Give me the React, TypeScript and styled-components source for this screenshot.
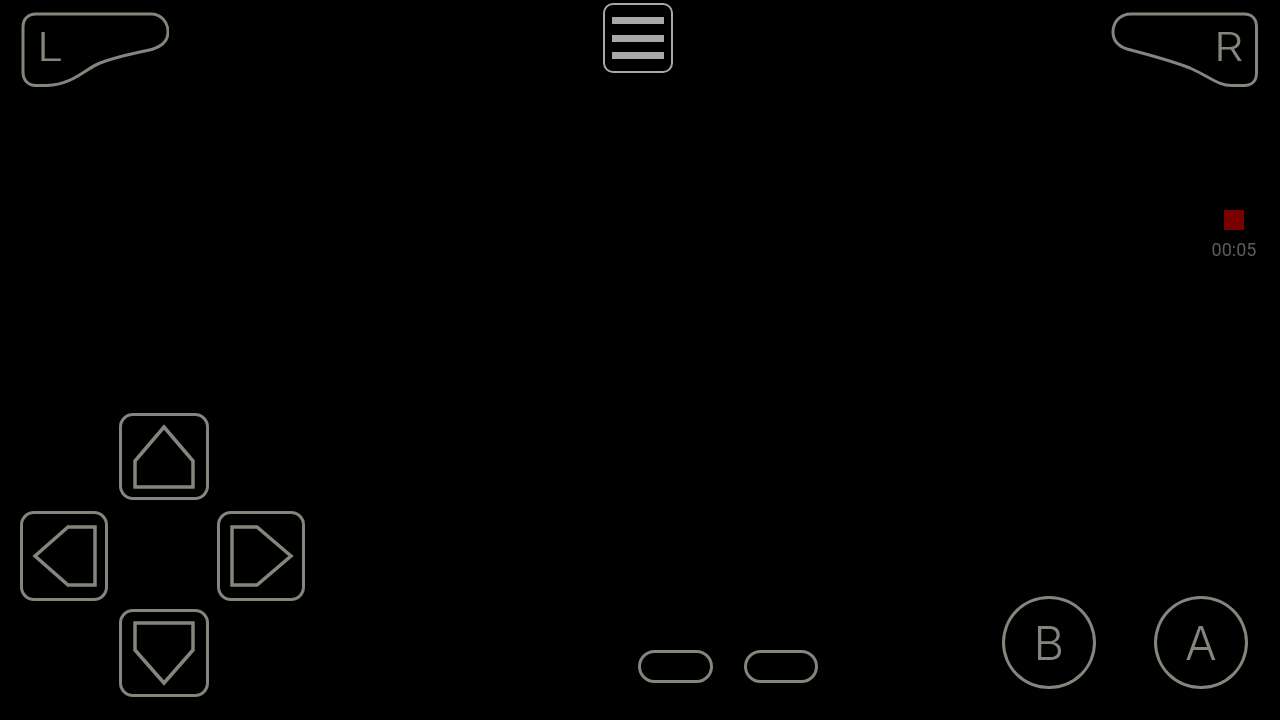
import React from 'react';
import styled, { createGlobalStyle } from 'styled-components';

const STROKE = '#85857d';

const GlobalStyle = createGlobalStyle`
  html, body {
    margin: 0;
    padding: 0;
    background: #000;
    overflow: hidden;
  }
`;

const arrows = {
  up: { viewBox: '122 416 84 81', points: '164,427 193,461 193,487 135,487 135,461' },
  left: { viewBox: '23 514 82 84', points: '35,556 68,527 95,527 95,585 68,585' },
  right: { viewBox: '220 514 82 84', points: '291,556 257,527 232,527 232,585 257,585' },
  down: { viewBox: '122 612 84 82', points: '135,623 193,623 193,650 164,683 135,650' },
};

type Direction = keyof typeof arrows;

const DpadKey: React.FC<{ direction: Direction }> = ({ direction }) => (
  <DirectionButton $direction={direction}>
    <svg width="100%" height="100%" viewBox={arrows[direction].viewBox} style={{ display: 'block' }}>
      <polygon points={arrows[direction].points} fill="none" stroke={STROKE} strokeWidth="3.500" />
    </svg>
  </DirectionButton>
);

export default function App() {
  return (
    <Screen>
      <GlobalStyle />
      <TopRow>
        <Shoulder>
          <svg width="148" height="76" viewBox="21 12 148 76">
            <path
              d="M36 14H151C161 14 168 22 168 32C168 41 162 46 153 49C137 53 118 56 100 63C85 69 72 85 47 85.500H36C28 85.500 23 80 23 72V27C23 19 28 14 36 14Z"
              fill="none"
              stroke={STROKE}
              strokeWidth="3"
            />
          </svg>
          <ShoulderLabel $side="left">L</ShoulderLabel>
        </Shoulder>
        <MenuButton>
          <MenuBar />
          <MenuBar />
          <MenuBar />
        </MenuButton>
        <Shoulder $right>
          <svg width="148" height="76" viewBox="1111 12 148 76">
            <path
              d="M1131 14H1244C1252 14 1256.500 19 1256.500 27V73C1256.500 81 1252 85.500 1244 85.500H1232C1218 85.500 1210 77 1190 68C1172 61 1150 55 1127 49C1118 46 1113 41 1113 32C1113 22 1120 14 1131 14Z"
              fill="none"
              stroke={STROKE}
              strokeWidth="3"
            />
          </svg>
          <ShoulderLabel $side="right">R</ShoulderLabel>
        </Shoulder>
      </TopRow>
      <RecordStatus>
        <RecordSquare />
        <RecordTime>00:05</RecordTime>
      </RecordStatus>
      <BottomRow>
        <Dpad>
          <DpadKey direction="up" />
          <DpadKey direction="left" />
          <DpadKey direction="right" />
          <DpadKey direction="down" />
        </Dpad>
        <Pills>
          <Pill />
          <Pill />
        </Pills>
        <RoundButtons>
          <RoundButton>B</RoundButton>
          <RoundButton>A</RoundButton>
        </RoundButtons>
      </BottomRow>
    </Screen>
  );
}

const Screen = styled.div`
  width: 1280px;
  height: 720px;
  background: #000;
  display: flex;
  flex-direction: column;
  box-sizing: border-box;
  font-family: Inter, 'Liberation Sans', sans-serif;
  filter: blur(0.6px);
`;

const TopRow = styled.div`
  display: flex;
  align-items: flex-start;
  height: 88px;
  padding: 3px 21px 0 21px;
  box-sizing: border-box;
`;

const Shoulder = styled.div<{ $right?: boolean }>`
  position: relative;
  width: 148px;
  height: 76px;
  margin-top: 9px;
  margin-left: ${({ $right }) => ($right ? 'auto' : '0')};

  svg {
    display: block;
  }
`;

const ShoulderLabel = styled.span<{ $side: 'left' | 'right' }>`
  position: absolute;
  top: 11px;
  ${({ $side }) => ($side === 'left' ? 'left: 16px;' : 'right: 16px;')}
  font-size: 40px;
  line-height: 48px;
  font-weight: 300;
  color: ${STROKE};
  transform: scaleX(1.16);
  transform-origin: ${({ $side }) => ($side === 'left' ? 'left' : 'right')} center;
`;

const MenuButton = styled.div`
  width: 70px;
  height: 70px;
  margin-left: 434px;
  padding: 12px 7px 12px 7px;
  box-sizing: border-box;
  border: 2px solid #a8a8a4;
  border-radius: 10px;
  display: flex;
  flex-direction: column;
  justify-content: space-between;
`;

const MenuBar = styled.div`
  height: 7px;
  background: #a8a8a6;
`;

const RecordStatus = styled.div`
  align-self: flex-end;
  width: 44px;
  margin: 122px 24px 0 0;
  display: flex;
  flex-direction: column;
  align-items: center;
  gap: 9px;
`;

const RecordSquare = styled.div`
  width: 20px;
  height: 20px;
  background: #780000;
`;

const RecordTime = styled.div`
  font-family: Roboto, 'Liberation Sans', sans-serif;
  font-size: 18px;
  line-height: 21px;
  color: #5c5c5c;
  white-space: nowrap;
`;

const BottomRow = styled.div`
  display: flex;
  align-items: flex-end;
  margin-top: 153px;
  padding-left: 20px;
`;

const Dpad = styled.div`
  display: grid;
  grid-template-columns: 88px 11px 90px 8px 88px;
  grid-template-rows: 87px 11px 90px 8px 88px;
  grid-template-areas:
    '. . up . .'
    '. . . . .'
    'left . . . right'
    '. . . . .'
    '. . down . .';
`;

const DirectionButton = styled.div<{ $direction: Direction }>`
  grid-area: ${({ $direction }) => $direction};
  border: 3px solid ${STROKE};
  border-radius: 14px;
  box-sizing: border-box;
`;

const Pills = styled.div`
  display: flex;
  gap: 31px;
  margin: 0 0 14px 333px;
`;

const Pill = styled.div`
  width: 74.500px;
  height: 33px;
  border: 3px solid ${STROKE};
  border-radius: 17px;
  box-sizing: border-box;
`;

const RoundButtons = styled.div`
  display: flex;
  gap: 58.500px;
  margin: 0 0 8px 184px;
`;

const RoundButton = styled.div`
  width: 93.500px;
  height: 93px;
  border: 3px solid ${STROKE};
  border-radius: 50%;
  box-sizing: border-box;
  display: flex;
  align-items: center;
  justify-content: center;
  font-size: 47px;
  font-weight: 300;
  color: ${STROKE};
`;
